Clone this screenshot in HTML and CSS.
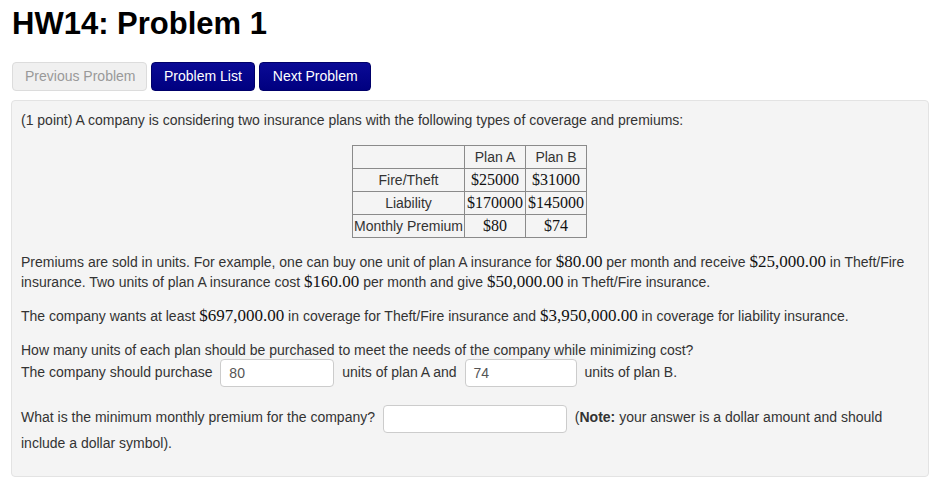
FILE: index.html
```html
<!DOCTYPE html>
<html>
<head>
<meta charset="utf-8">
<link rel="stylesheet" href="styles.css">
</head>
<body>
<div class="page">
  <h1 class="title">HW14: Problem 1</h1>
  <div class="nav">
    <span class="btn btn-disabled">Previous Problem</span>
    <span class="btn btn-primary">Problem List</span>
    <span class="btn btn-primary">Next Problem</span>
  </div>
  <div class="well">
    <p class="para">(1 point) A company is considering two insurance plans with the following types of coverage and premiums:</p>
    <table class="plans">
      <tr><td class="lbl"></td><td class="hd">Plan A</td><td class="hd">Plan B</td></tr>
      <tr><td class="lbl">Fire/Theft</td><td class="m">$25000</td><td class="m">$31000</td></tr>
      <tr><td class="lbl">Liability</td><td class="m">$170000</td><td class="m">$145000</td></tr>
      <tr><td class="lbl">Monthly Premium</td><td class="m">$80</td><td class="m">$74</td></tr>
    </table>
    <p class="para p2">Premiums are sold in units. For example, one can buy one unit of plan A insurance for <span class="m">$80.00</span> per month and receive <span class="m">$25,000.00</span> in Theft/Fire insurance. Two units of plan A insurance cost <span class="m">$160.00</span> per month and give <span class="m">$50,000.00</span> in Theft/Fire insurance.</p>
    <p class="para p3">The company wants at least <span class="m">$697,000.00</span> in coverage for Theft/Fire insurance and <span class="m">$3,950,000.00</span> in coverage for liability insurance.</p>
    <p class="para p4">How many units of each plan should be purchased to meet the needs of the company while minimizing cost?</p>
    <div class="row r1">The company should purchase <span class="inp w1">80</span> units of plan A and <span class="inp w2">74</span> units of plan B.</div>
    <div class="row r2">What is the minimum monthly premium for the company? <span class="inp w3"></span> (<b>Note:</b> your answer is a dollar amount and should include a dollar symbol).</div>
  </div>
</div>
</body>
</html>
```
FILE: styles.css
```css
* { box-sizing: border-box; }
html, body { margin: 0; padding: 0; background: #fff; }
body { font-family: "Liberation Sans", Arial, sans-serif; color: #333; font-size: 14px; }
.page { padding: 0 16px 0 11px; }
.title { font-size: 31px; font-weight: bold; color: #000; line-height: 36px; margin: 6px 0 0 1px; }
.nav { display: flex; gap: 4px; margin: 20px 0 0 1px; }
.btn { display: inline-block; height: 29px; line-height: 27px; padding: 0 12px; font-size: 14px; border-radius: 4px; border: 1px solid transparent; }
.btn-disabled { background: #f0f0f0; border-color: #dcdcdc; color: #999; width: 135px; padding: 0 0 0 12px; }
.btn-primary { background: linear-gradient(#0a0a96, #000080); border-color: #00006a; color: #fff; }
.btn-primary + .btn-primary { padding: 0 12px 0 13px; }
.well { margin-top: 9px; width: 918px; height: 377px; background: #f4f4f4; border: 1px solid #e3e3e3; border-radius: 4px; padding: 9px 9px; }
.para { margin: 0; line-height: 20px; }
.plans { border-collapse: collapse; margin: 15px 0 0 331px; border: 1.5px solid #333; }
.plans td { border: 1px solid #8a8a8a; height: 23px; padding: 0 1px; text-align: center; font-size: 14px; line-height: 20px; }
.plans td.lbl { width: 112px; }
.plans td.hd { width: 61px; }
.m { font-family: "Liberation Serif", "Times New Roman", serif; font-size: 17px; color: #111; line-height: 14px; }
.plans td.m { font-size: 16px; padding: 0 1px; }
.p2 { margin-top: 14px; }
.p3 { margin-top: 14px; }
.p4 { margin-top: 14px; }
.row { line-height: 24px; }
.r1 { margin-top: 0px; }
.r2 { margin-top: 20px; }
.inp { display: inline-block; vertical-align: middle; height: 28px; background: #fff; border: 1px solid #ccc; border-radius: 4px; color: #555; padding: 0 8px; line-height: 26px; font-size: 14px; margin: -2px 4px; }
.w1 { width: 114px; }
.w2 { width: 112px; }
.w3 { width: 184px; }
```
